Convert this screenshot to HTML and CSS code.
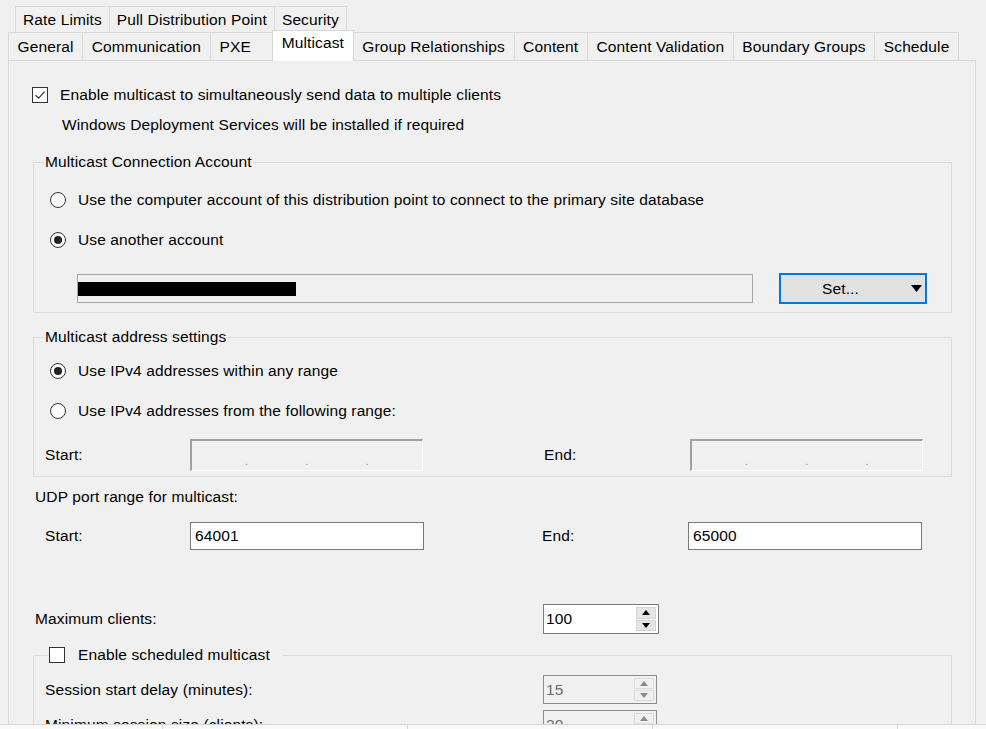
FILE: index.html
```html
<!DOCTYPE html>
<html lang="en">
<head>
    <meta charset="UTF-8">
    <meta name="viewport" content="width=device-width, initial-scale=1.0">
    <title>Distribution Point Properties - Multicast</title>
    <link rel="stylesheet" href="styles.css">
</head>
<body>
    <div class="dialog">
        <div class="tab-strip">
            <div class="tab-row back">
                <div class="tab">Rate Limits</div>
                <div class="tab">Pull Distribution Point</div>
                <div class="tab">Security</div>
            </div>
            <div class="tab-row front">
                <div class="tab">General</div>
                <div class="tab">Communication</div>
                <div class="tab short">PXE</div>
                <div class="tab active">Multicast</div>
                <div class="tab">Group Relationships</div>
                <div class="tab">Content</div>
                <div class="tab">Content Validation</div>
                <div class="tab">Boundary Groups</div>
                <div class="tab">Schedule</div>
            </div>
        </div>

        <div class="page">
            <div class="row enable">
                <span class="check">
                    <svg width="14" height="14" viewBox="0 0 14 14"><path d="M2.5 7.2 L5.6 10.2 L11.6 3.6" fill="none" stroke="#333" stroke-width="1.2"/></svg>
                </span>
                Enable multicast to simultaneously send data to multiple clients
            </div>
            <div class="row note">Windows Deployment Services will be installed if required</div>

            <!-- 连接账户 -->
            <fieldset class="group">
                <legend>Multicast Connection Account</legend>
                <div class="row option"><span class="radio"></span>Use the computer account of this distribution point to connect to the primary site database</div>
                <div class="row option"><span class="radio on"></span>Use another account</div>
                <div class="account-line">
                    <div class="textbox readonly"><span class="redact"></span></div>
                    <div class="split-btn">
                        <span>Set...</span>
                        <svg width="11" height="7" viewBox="0 0 11 7"><polygon points="0,0 11,0 5.5,7" fill="#000"/></svg>
                    </div>
                </div>
            </fieldset>

            <!-- 地址范围 -->
            <fieldset class="group address">
                <legend>Multicast address settings</legend>
                <div class="row option first"><span class="radio on"></span>Use IPv4 addresses within any range</div>
                <div class="row option"><span class="radio"></span>Use IPv4 addresses from the following range:</div>
                <div class="range-row">
                    <span class="field-label">Start:</span>
                    <div class="ipbox"><span>.</span><span>.</span><span>.</span></div>
                    <span class="field-label">End:</span>
                    <div class="ipbox"><span>.</span><span>.</span><span>.</span></div>
                </div>
            </fieldset>

            <div class="row udp">UDP port range for multicast:</div>
            <div class="range-row ports">
                <span class="field-label">Start:</span>
                <div class="textbox">64001</div>
                <span class="field-label">End:</span>
                <div class="textbox">65000</div>
            </div>

            <div class="max-row">
                <span class="field-label">Maximum clients:</span>
                <div class="spin">
                    <span class="spin-value">100</span>
                    <span class="spin-btns"><i class="up"></i><i class="down"></i></span>
                </div>
            </div>

            <!-- 计划多播 -->
            <fieldset class="group schedule">
                <legend><span class="check"></span>Enable scheduled multicast</legend>
                <div class="delay-row">
                    <span class="field-label">Session start delay (minutes):</span>
                    <div class="spin disabled">
                        <span class="spin-value">15</span>
                        <span class="spin-btns"><i class="up"></i><i class="down"></i></span>
                    </div>
                </div>
                <div class="delay-row second">
                    <span class="field-label">Minimum session size (clients):</span>
                    <div class="spin disabled">
                        <span class="spin-value">20</span>
                        <span class="spin-btns"><i class="up"></i><i class="down"></i></span>
                    </div>
                </div>
            </fieldset>
        </div>

        <div class="status">
            <span class="cell first"></span>
            <span class="cell"></span>
            <span class="cell"></span>
            <span class="cell"></span>
            <span class="cell last"></span>
        </div>
    </div>
</body>
</html>
```

FILE: styles.css
```css
* {
    box-sizing: border-box;
}

body {
    margin: 0;
    height: 729px;
    overflow: hidden;
    background-color: #f0f0f0;
    color: #000;
    font-family: "Liberation Sans", Arial, sans-serif;
    font-size: 15.5px;
    letter-spacing: 0.12px;
}

.dialog {
    height: 729px;
    display: flex;
    flex-direction: column;
}

/* 标签页 */
.tab-strip {
    padding-top: 6px;
}

.tab-row {
    display: flex;
}

.tab-row.back {
    margin-left: 15px;
    height: 26px;
}

.tab-row.front {
    margin-left: 8px;
    margin-right: 28px;
    height: 28px;
}

.tab {
    display: flex;
    align-items: center;
    justify-content: center;
    padding: 0 7px;
    margin-right: -1px;
    border: 1px solid #d9d9d9;
    border-bottom: none;
    white-space: nowrap;
}

.front .tab {
    flex-grow: 1;
    padding: 0 8px;
}

.front .tab.short {
    justify-content: flex-start;
    padding: 0 20px 0 9px;
}

.tab.active {
    align-self: flex-start;
    align-items: flex-start;
    height: 31px;
    margin-top: -2px;
    padding-top: 3px;
    background-color: #fff;
    position: relative;
    z-index: 1;
}

.page {
    flex: 1;
    margin: 0 10px 0 8px;
    border: 1px solid #d9d9d9;
    border-bottom: none;
    overflow: hidden;
}

/* 通用行 */
.row {
    display: flex;
    align-items: center;
    height: 22px;
}

.check {
    width: 16px;
    height: 16px;
    flex: none;
    border: 1px solid #333;
    background-color: #fff;
    display: inline-flex;
    align-items: center;
    justify-content: center;
}

.radio {
    width: 16px;
    height: 16px;
    flex: none;
    border: 1px solid #333;
    border-radius: 50%;
    background-color: #fff;
    margin-right: 12px;
    display: inline-flex;
    align-items: center;
    justify-content: center;
}

.radio.on::after {
    content: "";
    width: 8px;
    height: 8px;
    border-radius: 50%;
    background-color: #222;
}

.enable {
    margin: 23px 0 0 23px;
}

.enable .check {
    margin-right: 12px;
}

.note {
    margin: 8px 0 0 53px;
}

/* 分组框 */
.group {
    margin: 15px 23px 0 24px;
    padding: 0 0 8px 10px;
    border: 1px solid #dcdcdc;
    min-width: 0;
}

.group legend {
    padding: 0 1px;
    height: 18px;
    line-height: 18px;
}

.group:first-of-type {
    margin-top: 17px;
}

.option {
    margin: 18px 0 0 6px;
}

.option.first {
    margin-top: 14px;
}

.account-line {
    display: flex;
    align-items: center;
    height: 31px;
    margin: 22px 0 0 33px;
}

.textbox {
    height: 28px;
    border: 1px solid #7a7a7a;
    background-color: #fff;
    display: flex;
    align-items: center;
    padding-left: 4px;
}

.textbox.readonly {
    width: 676px;
    height: 29px;
    padding-left: 0;
    background-color: #f0f0f0;
    border-color: #a6a6a6;
}

.redact {
    width: 218px;
    height: 14px;
    background-color: #000;
}

.split-btn {
    width: 148px;
    height: 31px;
    margin-left: 26px;
    border: 2px solid #0078d7;
    background-color: #e1e1e1;
    display: flex;
    align-items: center;
    justify-content: space-between;
    padding: 0 3px 0 41px;
}

.address {
    padding-bottom: 5px;
}

.range-row {
    display: grid;
    grid-template-columns: 145px 354px 146px 233px;
    align-items: center;
    height: 32px;
    margin: 17px 0 0 1px;
}

.range-row .ipbox,
.range-row .textbox {
    width: 233px;
}

.ipbox {
    height: 32px;
    background-color: #f0f0f0;
    border-top: 2px solid #a0a0a0;
    border-left: 2px solid #a0a0a0;
    border-right: 1px solid #fff;
    border-bottom: 1px solid #fff;
    display: flex;
    align-items: flex-end;
    padding: 0 0 3px 53px;
    gap: 57px;
    color: #8a8a8a;
    font-size: 11px;
}

.udp {
    margin: 9px 0 0 26px;
}

.range-row.ports {
    height: 28px;
    margin: 14px 0 0 36px;
    grid-template-columns: 145px 352px 146px 233px;
}

.range-row.ports .textbox {
    width: 234px;
}

/* 数字框 */
.max-row {
    display: grid;
    grid-template-columns: 508px 116px;
    align-items: center;
    height: 30px;
    margin: 54px 0 0 26px;
}

.spin {
    height: 30px;
    border: 1px solid #7a7a7a;
    background-color: #fff;
    display: flex;
}

.spin-value {
    flex: 1;
    display: flex;
    align-items: center;
    padding-left: 2px;
}

.spin-btns {
    width: 20px;
    margin: 2px 2px 2px 0;
    display: flex;
    flex-direction: column;
    gap: 1px;
}

.spin-btns i {
    flex: 1;
    background-color: #e6e6e6;
    border: 1px solid #d4d4d4;
    display: flex;
    align-items: center;
    justify-content: center;
}

.spin-btns i::after {
    content: "";
    border-left: 4px solid transparent;
    border-right: 4px solid transparent;
}

.spin-btns .up::after {
    border-bottom: 5px solid #000;
}

.spin-btns .down::after {
    border-top: 5px solid #000;
}

.spin.disabled {
    height: 29px;
    border-color: #8c8c8c;
    background-color: #f0f0f0;
    color: #6d6d6d;
}

.spin.disabled .spin-btns i {
    background-color: #f0f0f0;
    border-color: #dcdcdc;
}

.spin.disabled .up::after {
    border-bottom-color: #8a8a8a;
}

.spin.disabled .down::after {
    border-top-color: #8a8a8a;
}

.schedule {
    margin-top: 12px;
    padding-bottom: 30px;
}

.schedule legend {
    display: flex;
    align-items: center;
    margin-left: 5px;
    padding: 0 12px 0 0;
}

.schedule legend .check {
    margin-right: 13px;
}

.delay-row {
    display: grid;
    grid-template-columns: 498px 114px;
    align-items: center;
    height: 29px;
    margin: 11px 0 0 1px;
}

.delay-row.second {
    margin-top: 6px;
}

/* 状态栏 */
.status {
    height: 5px;
    display: flex;
    border-top: 1px solid #d6d6d6;
    background-color: #fafafa;
}

.status .cell {
    width: 245px;
    border-right: 1px solid #d6d6d6;
}

.status .cell.first {
    width: 163px;
}

.status .cell.last {
    flex: 1;
    border-right: none;
}
```
